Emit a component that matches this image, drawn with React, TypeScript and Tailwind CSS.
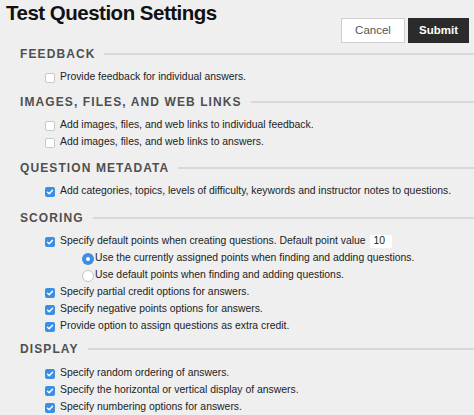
import React from "react";

const FONT = { fontFamily: '"Liberation Sans", Arial, sans-serif' };

function Check({ checked }: { checked: boolean }) {
  if (checked) {
    return (
      <span className="flex h-[10px] w-[10px] shrink-0 items-center justify-center rounded-[2px] bg-[#3c8ee4]">
        <svg width="8" height="8" viewBox="0 0 8 8">
          <path d="M1.5 4.2 L3.2 5.8 L6.5 2.2" fill="none" stroke="white" strokeWidth="1.4" strokeLinecap="round" strokeLinejoin="round" />
        </svg>
      </span>
    );
  }
  return <span className="h-[10px] w-[10px] shrink-0 rounded-[2px] border border-[#c9c9c9] bg-white" />;
}

function Radio({ checked }: { checked: boolean }) {
  if (checked) {
    return (
      <span className="flex h-[12px] w-[12px] shrink-0 items-center justify-center rounded-full bg-[#3c8ee4]">
        <span className="h-[4px] w-[4px] rounded-full bg-white" />
      </span>
    );
  }
  return <span className="h-[12px] w-[12px] shrink-0 rounded-full border border-[#c4c4c4] bg-white" />;
}

function Heading({ label, className }: { label: string; className: string }) {
  return (
    <div className={`flex h-[16px] items-center pl-[20px] ${className}`}>
      <span className="whitespace-nowrap text-[12px] font-bold leading-none tracking-[1.1px] text-[#4f4f4f]">{label}</span>
      <div className="ml-[9px] h-[2px] flex-1 bg-[#d8d8d8]" />
    </div>
  );
}

function Row({ checked, children }: { checked: boolean; children: React.ReactNode }) {
  return (
    <div className="flex h-[17px] items-center pl-[45px]">
      <Check checked={checked} />
      <span className="ml-[5px] whitespace-nowrap text-[10.4px] leading-none text-[#222]">{children}</span>
    </div>
  );
}

function RadioRow({ checked, children }: { checked: boolean; children: React.ReactNode }) {
  return (
    <div className="flex h-[17px] items-center pl-[82px]">
      <Radio checked={checked} />
      <span className="ml-[1px] whitespace-nowrap text-[10.4px] leading-none text-[#222]">{children}</span>
    </div>
  );
}

export default function App() {
  return (
    <div className="h-[415px] w-[474px] overflow-hidden bg-[#efefef]" style={FONT}>
      <div className="flex h-[46px] items-start justify-between">
        <h1 className="ml-[6px] mt-[1px] text-[20.5px] font-bold leading-[24px] tracking-[-0.5px] text-[#111]">Test Question Settings</h1>
        <div className="mr-[5px] mt-[18px] flex gap-[3px]">
          <button className="flex h-[25px] w-[64px] items-center justify-center border border-[#cfcfcf] bg-white text-[11.5px] text-[#555]">
            Cancel
          </button>
          <button className="flex h-[25px] w-[61px] items-center justify-center bg-[#2b2b2b] text-[11.5px] font-bold text-white">
            Submit
          </button>
        </div>
      </div>

      <Heading label="FEEDBACK" className="mt-0" />
      <div className="mt-[7px]">
        <Row checked={false}>Provide feedback for individual answers.</Row>
      </div>

      <Heading label="IMAGES, FILES, AND WEB LINKS" className="mt-[8px]" />
      <div className="mt-[7px]">
        <Row checked={false}>Add images, files, and web links to individual feedback.</Row>
        <Row checked={false}>Add images, files, and web links to answers.</Row>
      </div>

      <Heading label="QUESTION METADATA" className="mt-[9px]" />
      <div className="mt-[7px]">
        <Row checked={true}>Add categories, topics, levels of difficulty, keywords and instructor notes to questions.</Row>
      </div>

      <Heading label="SCORING" className="mt-[10px]" />
      <div className="mt-[7px]">
        <div className="flex h-[17px] items-center pl-[45px]">
          <Check checked={true} />
          <span className="ml-[5px] whitespace-nowrap text-[10.4px] leading-none text-[#222]">
            Specify default points when creating questions. Default point value
          </span>
          <span className="ml-[4px] flex h-[13px] w-[22px] items-center bg-white pl-[4px] text-[10.4px] leading-none text-[#222]">10</span>
        </div>
        <RadioRow checked={true}>Use the currently assigned points when finding and adding questions.</RadioRow>
        <RadioRow checked={false}>Use default points when finding and adding questions.</RadioRow>
        <Row checked={true}>Specify partial credit options for answers.</Row>
        <Row checked={true}>Specify negative points options for answers.</Row>
        <Row checked={true}>Provide option to assign questions as extra credit.</Row>
      </div>

      <Heading label="DISPLAY" className="mt-[6px]" />
      <div className="mt-[8px]">
        <Row checked={true}>Specify random ordering of answers.</Row>
        <Row checked={true}>Specify the horizontal or vertical display of answers.</Row>
        <Row checked={true}>Specify numbering options for answers.</Row>
      </div>
    </div>
  );
}
